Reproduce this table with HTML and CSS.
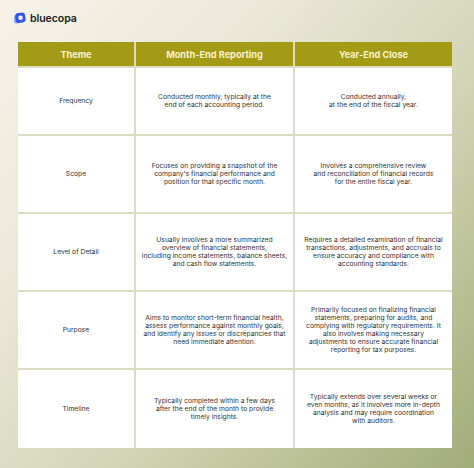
FILE: index.html
```html
<!DOCTYPE html>
<html>
<head>
<meta charset="utf-8">
<link rel="stylesheet" href="styles.css">
</head>
<body>
<div class="page">
  <div class="brand">
    <svg class="logo" width="13" height="13" viewBox="0 0 13 13">
      <path d="M1 5.5 Q1 3 3.2 2.6 L6 2 L5 11.5 L3.2 11.5 Q1 11.5 1 9.2 Z" fill="#8ea5f7"/>
      <rect x="2.4" y="0.8" width="10" height="10" rx="3.6" transform="rotate(-8 7.4 5.8)" fill="#2f55e4"/>
      <circle cx="7.5" cy="5.8" r="2.3" fill="#f5f2ea"/>
    </svg>
    <span class="brand-name">bluecopa</span>
  </div>
  <div class="table">
    <div class="th">Theme</div>
    <div class="th">Month-End Reporting</div>
    <div class="th">Year-End Close</div>

    <div class="td r1">Frequency</div>
    <div class="td r1">Conducted monthly, typically at the<br>end of each accounting period.</div>
    <div class="td r1">Conducted annually,<br>at the end of the fiscal year.</div>

    <div class="td">Scope</div>
    <div class="td">Focuses on providing a snapshot of the<br>company's financial performance and<br>position for that specific month.</div>
    <div class="td">Involves a comprehensive review<br>and reconciliation of financial records<br>for the entire fiscal year.</div>

    <div class="td">Level of Detail</div>
    <div class="td">Usually involves a more summarized<br>overview of financial statements,<br>including income statements, balance sheets,<br>and cash flow statements.</div>
    <div class="td">Requires a detailed examination of financial<br>transactions, adjustments, and accruals to<br>ensure accuracy and compliance with<br>accounting standards.</div>

    <div class="td">Purpose</div>
    <div class="td">Aims to monitor short-term financial health,<br>assess performance against monthly goals,<br>and identify any issues or discrepancies that<br>need immediate attention.</div>
    <div class="td">Primarily focused on finalizing financial<br>statements, preparing for audits, and<br>complying with regulatory requirements. It<br>also involves making necessary<br>adjustments to ensure accurate financial<br>reporting for tax purposes.</div>

    <div class="td">Timeline</div>
    <div class="td">Typically completed within a few days<br>after the end of the month to provide<br>timely insights.</div>
    <div class="td">Typically extends over several weeks or<br>even months, as it involves more in-depth<br>analysis and may require coordination<br>with auditors.</div>
  </div>
</div>
</body>
</html>
```

FILE: styles.css
```css
html, body {
  margin: 0;
  padding: 0;
}
body {
  width: 474px;
  height: 468px;
  overflow: hidden;
  font-family: Inter, "Liberation Sans", sans-serif;
}
.page {
  width: 474px;
  height: 468px;
  box-sizing: border-box;
  padding: 11px 22px 0 18px;
  background: linear-gradient(132deg, #f6f2e9 0%, #ebe8d8 30%, #d0d3b3 62%, #a2ac78 100%);
}
.brand {
  display: flex;
  align-items: center;
  gap: 4px;
  height: 15px;
  margin-left: -5px;
}
.logo {
  display: block;
}
.brand-name {
  font-size: 10.6px;
  font-weight: 600;
  color: #1d1d22;
  letter-spacing: -0.1px;
}
.table {
  margin-top: 16px;
  display: grid;
  grid-template-columns: 116px 157px 157px;
  grid-template-rows: 24px 66px 76px 76px 76px 78px;
  gap: 2px;
  background: #dcdbc3;
  width: 434px;
}
.th {
  background: #a39b16;
  color: #f8f2cc;
  font-weight: 700;
  font-size: 9.2px;
  display: flex;
  align-items: center;
  justify-content: center;
}
.td {
  background: #ffffff;
  color: #333333;
  font-size: 6.75px;
  line-height: 8px;
  text-align: center;
  display: flex;
  align-items: center;
  justify-content: center;
}
```
